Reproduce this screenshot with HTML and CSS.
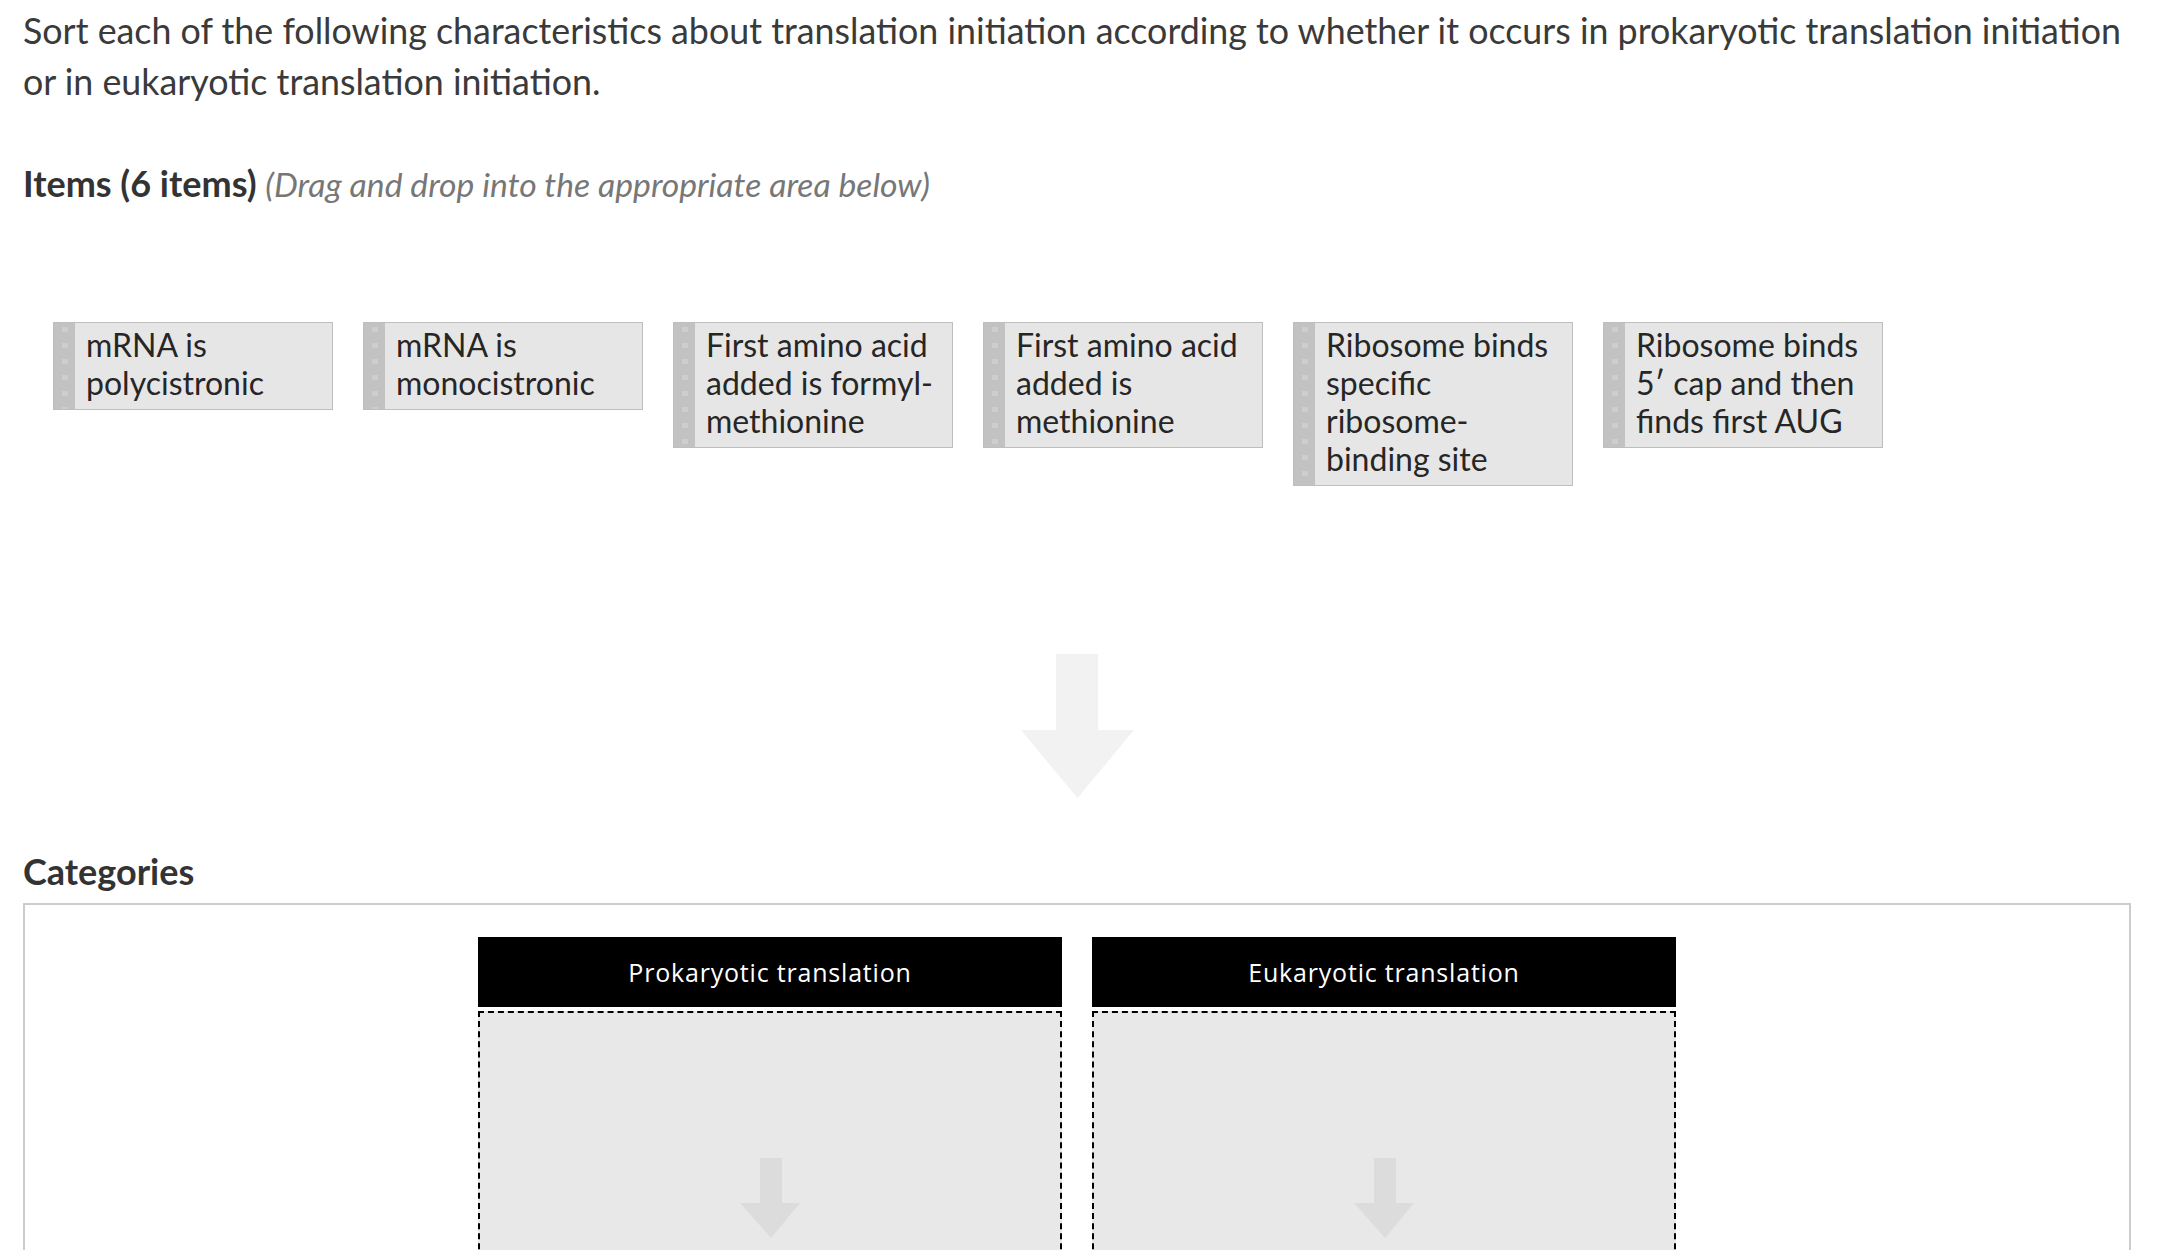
FILE: index.html
```html
<!DOCTYPE html>
<html lang="en">
<head>
  <meta charset="UTF-8">
  <title>Sort translation initiation characteristics</title>
  <link rel="stylesheet" href="styles.css">
</head>

<body>
  <div class="page">
    <!-- Question prompt -->
    <p class="prompt">Sort each of the following characteristics about translation initiation according to whether it occurs in prokaryotic translation initiation or in eukaryotic translation initiation.</p>

    <!-- Draggable items -->
    <h2 class="section-title">Items (6 items) <span class="hint">(Drag and drop into the appropriate area below)</span></h2>

    <div class="items">
      <div class="item"><span class="grip"></span><span class="item-text">mRNA is polycistronic</span></div>
      <div class="item"><span class="grip"></span><span class="item-text">mRNA is monocistronic</span></div>
      <div class="item"><span class="grip"></span><span class="item-text">First amino acid added is formyl-methionine</span></div>
      <div class="item"><span class="grip"></span><span class="item-text">First amino acid added is methionine</span></div>
      <div class="item"><span class="grip"></span><span class="item-text">Ribosome binds specific ribosome-binding site</span></div>
      <div class="item"><span class="grip"></span><span class="item-text">Ribosome binds 5&prime; cap and then finds first AUG</span></div>
    </div>

    <div class="big-arrow">
      <svg width="113" height="144" viewBox="0 0 113 144">
        <path d="M35 0 H77 V76 H113 L56.5 144 L0 76 H35 Z" fill="#f2f2f2"/>
      </svg>
    </div>

    <!-- Drop targets -->
    <h2 class="section-title small">Categories</h2>

    <div class="categories">
      <div class="category">
        <div class="category-head">Prokaryotic translation</div>
        <div class="drop-zone">
          <svg width="60" height="80" viewBox="0 0 60 80">
            <path d="M20 0 H42 V45 H60 L31 80 L0 45 H20 Z" fill="#dcdcdc"/>
          </svg>
        </div>
      </div>
      <div class="category">
        <div class="category-head">Eukaryotic translation</div>
        <div class="drop-zone">
          <svg width="60" height="80" viewBox="0 0 60 80">
            <path d="M20 0 H42 V45 H60 L31 80 L0 45 H20 Z" fill="#dcdcdc"/>
          </svg>
        </div>
      </div>
    </div>
  </div>
</body>
</html>
```

FILE: styles.css
```css
/* Basic reset */
* {
  margin: 0;
  padding: 0;
  box-sizing: border-box;
}

body {
  font-family: Lato, "Open Sans", sans-serif;
  color: #333;
  background: #fff;
  overflow: hidden;
}

.page {
  width: 2131px;
  padding: 5px 0 0 23px;
}

/* Prompt text */
.prompt {
  font-size: 35.8px;
  line-height: 51px;
  color: #3a3a3a;
  margin-right: -24px;
}

/* Section headings */
.section-title {
  font-size: 36px;
  line-height: 51px;
  font-weight: bold;
  color: #333;
  margin-top: 51px;
}

.section-title .hint {
  font-weight: normal;
  font-style: italic;
  font-size: 33.7px;
  color: #777;
}

.section-title.small {
  line-height: 36px;
  margin-top: 55px;
}

/* Item tray */
.items {
  display: flex;
  align-items: flex-start;
  gap: 30px;
  padding: 112px 0 0 30px;
}

.item {
  width: 280px;
  display: flex;
  background: #e6e6e6;
  border: 1px solid #bebebe;
}

.grip {
  flex: 0 0 21px;
  background-color: #c2c2c2;
  background-image: repeating-linear-gradient(to bottom, #cdcdcd 0 5px, transparent 5px 16px);
  background-size: 6px 100%;
  background-position: 8px 4px;
  background-repeat: no-repeat;
}

.item-text {
  padding: 3px 6px 7px 11px;
  font-size: 32px;
  line-height: 38px;
  color: #262626;
}

/* Arrow between tray and categories */
.big-arrow {
  display: flex;
  justify-content: center;
  margin-top: 168px;
}

.big-arrow svg {
  display: block;
}

/* Category area */
.categories {
  margin-top: 14px;
  border: 2px solid #ccc;
  border-bottom: none;
  padding-top: 32px;
  height: 360px;
  display: flex;
  justify-content: center;
  gap: 30px;
}

.category {
  width: 584px;
}

.category-head {
  height: 70px;
  background: #000;
  color: #fff;
  font-family: "Open Sans", sans-serif;
  font-size: 25px;
  letter-spacing: 0.8px;
  display: flex;
  align-items: center;
  justify-content: center;
}

.drop-zone {
  margin-top: 4px;
  height: 400px;
  background: #e8e8e8;
  border: 2px dashed #000;
  display: flex;
  justify-content: center;
  padding-top: 145px;
}

.drop-zone svg {
  display: block;
}
```
